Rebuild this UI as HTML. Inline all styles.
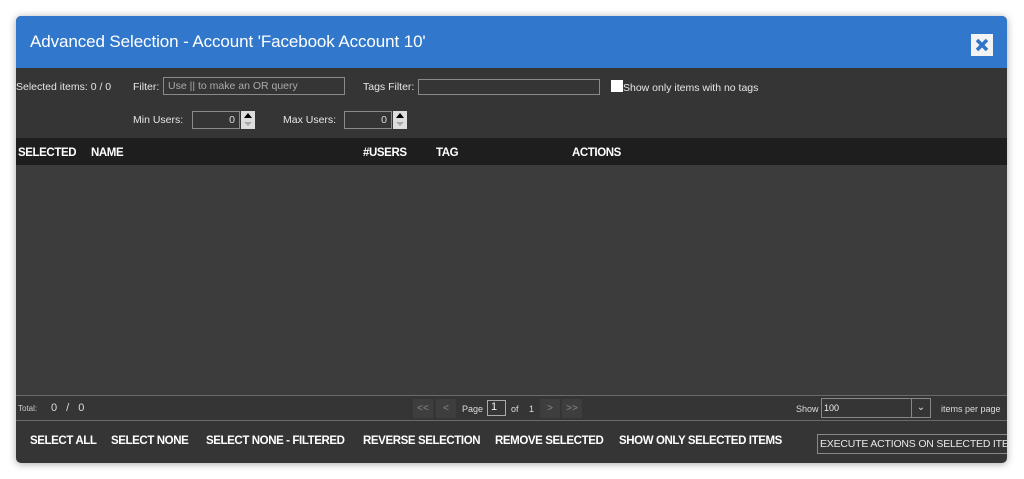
<!DOCTYPE html>
<html><head><meta charset="utf-8"><style>
*{margin:0;padding:0;box-sizing:border-box}
body{width:1024px;height:479px;background:#fff;font-family:"Liberation Sans",sans-serif;position:relative;overflow:hidden;color:#ddd}
.a{position:absolute}
#win{left:16px;top:16px;width:991px;height:447px;background:#353535;border-radius:5px;box-shadow:0 1px 8px rgba(0,0,0,.35);overflow:hidden}
#title{left:0;top:0;width:991px;height:52px;background:#3178cc;color:#fff;font-size:17px;padding:16px 0 0 14px;letter-spacing:-0.1px}
.s{font-size:10.5px;color:#e6e6e6}
.in{border:1px solid #8a8a8a;height:18px;font-size:10.5px;color:#aaa;padding:2px 4px}
.b{font-weight:bold;font-size:11.5px;letter-spacing:-0.4px;color:#fff;white-space:nowrap}
.pg{background:#3e3e3e;color:#888;font-size:10px;text-align:center;width:20px;height:19px;line-height:19px}
.spin{width:14px;height:18px;background:#ddd}
</style></head><body>
<div id="win" class="a">
 <div id="title" class="a">Advanced Selection - Account 'Facebook Account 10'</div>
 <div class="a" style="left:955px;top:18px;width:22px;height:22px;background:#f3f3f3">
  <svg width="22" height="22"><path d="M6 6L16 16M16 6L6 16" stroke="#2f74c6" stroke-width="3.5"/></svg></div>

 <div class="a s" style="left:0;top:65px">Selected items: 0 / 0</div>
 <div class="a s" style="left:117px;top:65px">Filter:</div>
 <div class="a in" style="left:147px;top:61px;width:182px">Use || to make an OR query</div>
 <div class="a s" style="left:347px;top:65px">Tags Filter:</div>
 <div class="a in" style="left:402px;top:63px;width:182px;height:16px"></div>
 <div class="a" style="left:595px;top:64px;width:12px;height:12px;background:#fff"></div>
 <div class="a s" style="left:607px;top:66px">Show only items with no tags</div>

 <div class="a s" style="left:117px;top:98px">Min Users:</div>
 <div class="a in" style="left:176px;top:95px;width:48px;text-align:right;color:#ddd">0</div>
 <div class="a spin" style="left:225px;top:95px"><div style="margin:2px auto 0;width:0;border:4px solid transparent;border-bottom:5px solid #000;border-top:0"></div><div style="margin:4px auto 0;width:0;border:4px solid transparent;border-top:4px solid #aaa;border-bottom:0"></div></div>
 <div class="a s" style="left:267px;top:98px">Max Users:</div>
 <div class="a in" style="left:328px;top:95px;width:48px;text-align:right;color:#ddd">0</div>
 <div class="a spin" style="left:377px;top:95px"><div style="margin:2px auto 0;width:0;border:4px solid transparent;border-bottom:5px solid #000;border-top:0"></div><div style="margin:4px auto 0;width:0;border:4px solid transparent;border-top:4px solid #aaa;border-bottom:0"></div></div>

 <div class="a" style="left:0;top:122px;width:991px;height:27px;background:#1e1e1e"></div>
 <div class="a b" style="left:2px;top:131px">SELECTED</div>
 <div class="a b" style="left:75px;top:131px">NAME</div>
 <div class="a b" style="left:347px;top:131px">#USERS</div>
 <div class="a b" style="left:420px;top:131px">TAG</div>
 <div class="a b" style="left:556px;top:131px">ACTIONS</div>
 <div class="a" style="left:0;top:149px;width:991px;height:230px;background:#3c3c3c"></div>
 <div class="a" style="left:0;top:379px;width:991px;height:1px;background:#6a6a6a"></div>
 <div class="a" style="left:0;top:404px;width:991px;height:1px;background:#6a6a6a"></div>

 <div class="a" style="left:2px;top:388px;font-size:8px;color:#ccc">Total:</div>
 <div class="a" style="left:35px;top:386px;font-size:11px;color:#ddd;word-spacing:6px">0 / 0</div>

 <div class="a pg" style="left:397px;top:383px">&lt;&lt;</div>
 <div class="a pg" style="left:420px;top:383px">&lt;</div>
 <div class="a" style="left:446px;top:388px;font-size:9px;color:#ddd">Page</div>
 <div class="a" style="left:471px;top:384px;width:19px;height:16px;border:1px solid #aaa;font-size:11px;padding-left:3px;color:#eee">1</div>
 <div class="a" style="left:495px;top:388px;font-size:9px;color:#ddd">of</div>
 <div class="a" style="left:513px;top:388px;font-size:9px;color:#ddd">1</div>
 <div class="a pg" style="left:524px;top:383px">&gt;</div>
 <div class="a pg" style="left:546px;top:383px">&gt;&gt;</div>

 <div class="a" style="left:780px;top:388px;font-size:9px;color:#ddd">Show</div>
 <div class="a" style="left:805px;top:382px;width:110px;height:20px;border:1px solid #888;font-size:9px;padding:4px 2px;color:#eee">100</div>
 <div class="a" style="left:895px;top:382px;width:20px;height:20px;border:1px solid #888;text-align:center;font-size:10px;line-height:18px">&#8964;</div>
 <div class="a" style="left:925px;top:388px;font-size:9px;color:#ddd">items per page</div>

 <div class="a b" style="left:14px;top:419px">SELECT ALL</div>
 <div class="a b" style="left:95px;top:419px">SELECT NONE</div>
 <div class="a b" style="left:190px;top:419px">SELECT NONE - FILTERED</div>
 <div class="a b" style="left:347px;top:419px">REVERSE SELECTION</div>
 <div class="a b" style="left:479px;top:419px">REMOVE SELECTED</div>
 <div class="a b" style="left:603px;top:419px">SHOW ONLY SELECTED ITEMS</div>
 <div class="a" style="left:801px;top:418px;width:200px;height:20px;border:1px solid #888;font-size:10.5px;letter-spacing:-0.2px;padding:3px 2px;color:#e8e8e8;white-space:nowrap;overflow:hidden">EXECUTE ACTIONS ON SELECTED ITEMS</div>
</div>
</body></html>
